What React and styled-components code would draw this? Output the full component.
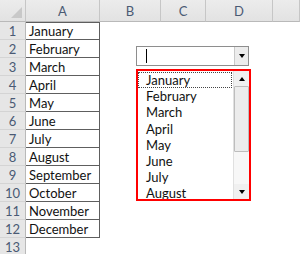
import React from 'react';
import styled, { createGlobalStyle } from 'styled-components';

const months = [
  'January', 'February', 'March', 'April', 'May', 'June',
  'July', 'August', 'September', 'October', 'November', 'December',
];

const GlobalStyle = createGlobalStyle`
  body {
    margin: 0;
    background: #ffffff;
    font-family: Lato, "Open Sans", sans-serif;
    overflow: hidden;
  }
`;

const Sheet = styled.div`
  position: relative;
  width: 300px;
  display: grid;
  grid-template-columns: 26px 74px 61px 45px 67px 1fr;
  grid-template-rows: 22px repeat(13, 18px);
  background: #ffffff;
`;

const Corner = styled.div`
  position: relative;
  background: linear-gradient(#ececec, #e2e2e2);
  border-right: 1px solid #c6c6c6;
  border-bottom: 1px solid #b9b9b9;

  &::after {
    content: '';
    position: absolute;
    right: 3px;
    bottom: 3px;
    border-style: solid;
    border-width: 0 0 11px 11px;
    border-color: transparent transparent #c8c8c8 transparent;
  }
`;

const ColHead = styled.div`
  display: flex;
  align-items: center;
  justify-content: center;
  background: linear-gradient(#ececec, #e2e2e2);
  border-right: 1px solid #c6c6c6;
  border-bottom: 1px solid #b9b9b9;
  color: #4a5a74;
  font-size: 13px;
`;

const RowHead = styled.div`
  grid-column: 1;
  grid-row: ${(p) => p.$row};
  display: flex;
  align-items: center;
  justify-content: center;
  background: #e6e6e6;
  border-right: 1px solid #b9b9b9;
  border-bottom: 1px solid #d4d4d4;
  color: #4a5a74;
  font-size: 13px;
`;

const Cell = styled.div`
  grid-column: 2;
  grid-row: ${(p) => p.$row};
  display: flex;
  align-items: center;
  padding-left: 3px;
  font-size: 13px;
  color: #111111;
  background: #ffffff;
  border-right: 1px solid #5e5e5e;
  border-bottom: 1px solid #5e5e5e;
  border-top: ${(p) => (p.$row === 2 ? '1px solid #5e5e5e' : 'none')};
  white-space: nowrap;
`;

const Combo = styled.div`
  position: absolute;
  left: 136px;
  top: 46px;
  width: 113px;
  height: 20px;
  box-sizing: border-box;
  border: 1px solid #8e8e8e;
  background: #ffffff;
  display: flex;
  align-items: stretch;
`;

const ComboInput = styled.div`
  flex: 1;
  display: flex;
  align-items: center;
  padding-left: 9px;
`;

const Caret = styled.span`
  width: 1px;
  height: 14px;
  background: #000000;
`;

const ArrowButton = styled.div`
  width: 14px;
  display: flex;
  align-items: center;
  justify-content: center;
  background: #ececec;
  border-left: 1px solid #c9c9c9;
  box-sizing: border-box;
`;

const Tri = styled.span`
  width: 0;
  height: 0;
  border-left: 3.5px solid transparent;
  border-right: 3.5px solid transparent;
  border-top: ${(p) => (p.$up ? 'none' : '4px solid #000')};
  border-bottom: ${(p) => (p.$up ? '4px solid #000' : 'none')};
`;

const ListBox = styled.div`
  position: absolute;
  left: 136px;
  top: 69px;
  width: 115px;
  height: 132px;
  box-sizing: border-box;
  border: 2px solid #ff0000;
  background: #ffffff;
  display: flex;
`;

const Items = styled.div`
  flex: 1;
  overflow: hidden;
  padding-top: 1px;
`;

const Item = styled.div`
  height: 16.2px;
  line-height: 16px;
  padding-left: 7px;
  font-size: 13px;
  color: #111111;
  box-sizing: border-box;
  border: ${(p) => (p.$focus ? '1px dotted #444' : '1px solid transparent')};
  margin-right: 1px;
  display: flex;
  align-items: center;
`;

const Scroll = styled.div`
  width: 15px;
  display: flex;
  flex-direction: column;
  background: #f2f2f2;
  border-left: 1px solid #e0e0e0;
`;

const ScrollBtn = styled.div`
  height: 15px;
  display: flex;
  align-items: center;
  justify-content: center;
  background: #f0f0f0;
`;

const Thumb = styled.div`
  height: 66px;
  box-sizing: border-box;
  background: #ececec;
  border: 1px solid #bdbdbd;
  border-radius: 1px;
`;

const Track = styled.div`
  flex: 1;
  background: #f7f7f7;
`;

export default function App() {
  return (
    <>
      <GlobalStyle />
      <Sheet>
        <Corner />
        {['A', 'B', 'C', 'D', ''].map((c, i) => (
          <ColHead key={i}>{c}</ColHead>
        ))}
        {Array.from({ length: 13 }, (_, i) => (
          <RowHead key={`r${i}`} $row={i + 2}>{i + 1}</RowHead>
        ))}
        {months.map((m, i) => (
          <Cell key={m} $row={i + 2}>{m}</Cell>
        ))}

        <Combo>
          <ComboInput>
            <Caret />
          </ComboInput>
          <ArrowButton>
            <Tri />
          </ArrowButton>
        </Combo>

        <ListBox>
          <Items>
            {months.slice(0, 8).map((m, i) => (
              <Item key={m} $focus={i === 0}>{m}</Item>
            ))}
          </Items>
          <Scroll>
            <ScrollBtn>
              <Tri $up />
            </ScrollBtn>
            <Thumb />
            <Track />
            <ScrollBtn>
              <Tri />
            </ScrollBtn>
          </Scroll>
        </ListBox>
      </Sheet>
    </>
  );
}
